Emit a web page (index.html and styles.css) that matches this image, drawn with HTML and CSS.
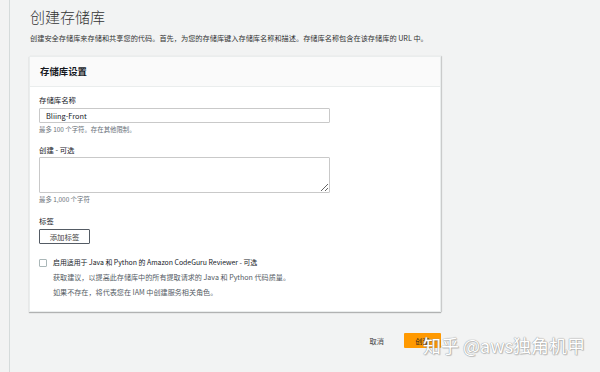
FILE: index.html
```html
<!DOCTYPE html>
<html lang="zh-CN">
<head>
    <meta charset="UTF-8">
    <meta name="viewport" content="width=device-width, initial-scale=1.0">
    <title>创建存储库</title>
    <link rel="stylesheet" href="styles.css">
</head>
<body>
    <div class="page">
        <h1 class="title">创建存储库</h1>
        <p class="desc">创建安全存储库来存储和共享您的代码。首先，为您的存储库键入存储库名称和描述。存储库名称包含在该存储库的 URL 中。</p>

        <div class="card">
            <div class="card-header">存储库设置</div>
            <div class="card-body">
                <label class="field-label" for="repo-name">存储库名称</label>
                <input type="text" id="repo-name" class="text-input" value="Bliing-Front">
                <p class="hint">最多 100 个字符。存在其他限制。</p>

                <label class="field-label gap" for="repo-desc">创建 - 可选</label>
                <textarea id="repo-desc" class="text-area"></textarea>
                <p class="hint">最多 1,000 个字符</p>

                <div class="field-label tags-label">标签</div>
                <button type="button" class="tag-button">添加标签</button>

                <div class="check-row">
                    <span class="checkbox"></span>
                    <div class="check-text">
                        <div class="check-title">启用适用于 Java 和 Python 的 Amazon CodeGuru Reviewer - 可选</div>
                        <div class="check-note">获取建议，以提高此存储库中的所有提取请求的 Java 和 Python 代码质量。</div>
                        <div class="check-note">如果不存在，将代表您在 IAM 中创建服务相关角色。</div>
                    </div>
                </div>
            </div>
        </div>

        <div class="actions">
            <button type="button" class="cancel-button">取消</button>
            <button type="button" class="create-button">创建</button>
        </div>
    </div>
    <div class="watermark">知乎 @aws独角机甲</div>
</body>
</html>
```

FILE: styles.css
```css
body {
    margin: 0;
    padding: 0;
    background: #f2f3f3;
    font-family: "Noto Sans CJK SC", "Noto Sans", sans-serif;
    color: #16191f;
}
.page {
    margin-left: 9px;
    border-left: 1px solid #d5dbdb;
    padding-left: 19px;
    min-height: 372px;
    box-sizing: border-box;
}
.title {
    margin: 0;
    padding-top: 7px;
    padding-left: 1px;
    font-size: 15px;
    line-height: 20px;
    font-weight: 300;
    color: #333;
}
.desc {
    margin: 5px 0 0 1px;
    font-size: 7.2px;
    line-height: 12px;
    color: #333;
}
.card {
    margin-top: 12px;
    width: 412px;
    background: #fff;
    border: 1px solid #eaeded;
    box-shadow: 0 1px 1px rgba(0, 0, 0, 0.25), 1px 0 1px rgba(0, 0, 0, 0.12);
    box-sizing: border-box;
}
.card-header {
    height: 29px;
    line-height: 29px;
    padding: 0 10px;
    background: #fafafa;
    border-bottom: 1px solid #eaeded;
    font-size: 9.4px;
    font-weight: bold;
}
.card-body {
    padding: 7px 9px 13px;
}
.field-label {
    display: block;
    font-size: 7.4px;
    line-height: 12px;
    margin-bottom: 2px;
}
.gap {
    margin-top: 8px;
    margin-bottom: 1px;
}
.text-input {
    display: block;
    width: 291px;
    height: 15px;
    box-sizing: border-box;
    border: 1px solid #c9c9c9;
    border-radius: 1px;
    padding: 0 6px;
    font-family: inherit;
    font-size: 7.4px;
    color: #16191f;
}
.text-area {
    display: block;
    width: 291px;
    height: 36px;
    box-sizing: border-box;
    border: 1px solid #c9c9c9;
    border-radius: 1px;
    margin: 0;
}
.hint {
    margin: 1px 0 0;
    font-size: 6.4px;
    line-height: 12px;
    color: #687078;
}
.tags-label {
    margin-top: 9px;
}
.tag-button {
    display: block;
    width: 51px;
    height: 15px;
    padding: 0;
    background: #fff;
    border: 1px solid #545b64;
    border-radius: 1px;
    font-family: inherit;
    font-size: 7.4px;
    color: #444;
}
.check-row {
    display: flex;
    gap: 6px;
    margin-top: 12px;
}
.checkbox {
    width: 6px;
    height: 6px;
    margin-top: 3px;
    border: 1px solid #aab7b8;
    border-radius: 1px;
    flex-shrink: 0;
}
.check-text {
    font-size: 6.9px;
    line-height: 12px;
}
.check-note {
    margin-top: 3px;
    color: #545b64;
    font-size: 7.1px;
}
.actions {
    width: 412px;
    display: flex;
    justify-content: flex-end;
    align-items: center;
    gap: 20px;
    margin-top: 21px;
}
.cancel-button {
    background: none;
    border: none;
    padding: 0;
    font-family: inherit;
    font-size: 7.2px;
    color: #444;
}
.create-button {
    width: 37px;
    height: 15px;
    padding: 0;
    background: #f90;
    border: none;
    border-radius: 1px;
    font-family: inherit;
    font-size: 7.2px;
    color: #222;
}
.watermark {
    position: absolute;
    left: 423px;
    top: 334px;
    font-size: 18px;
    line-height: 22px;
    color: #fff;
    text-shadow: 0 0 1px #999, 0 0 1px #999, 1px 1px 1px rgba(0, 0, 0, 0.2);
}
```
